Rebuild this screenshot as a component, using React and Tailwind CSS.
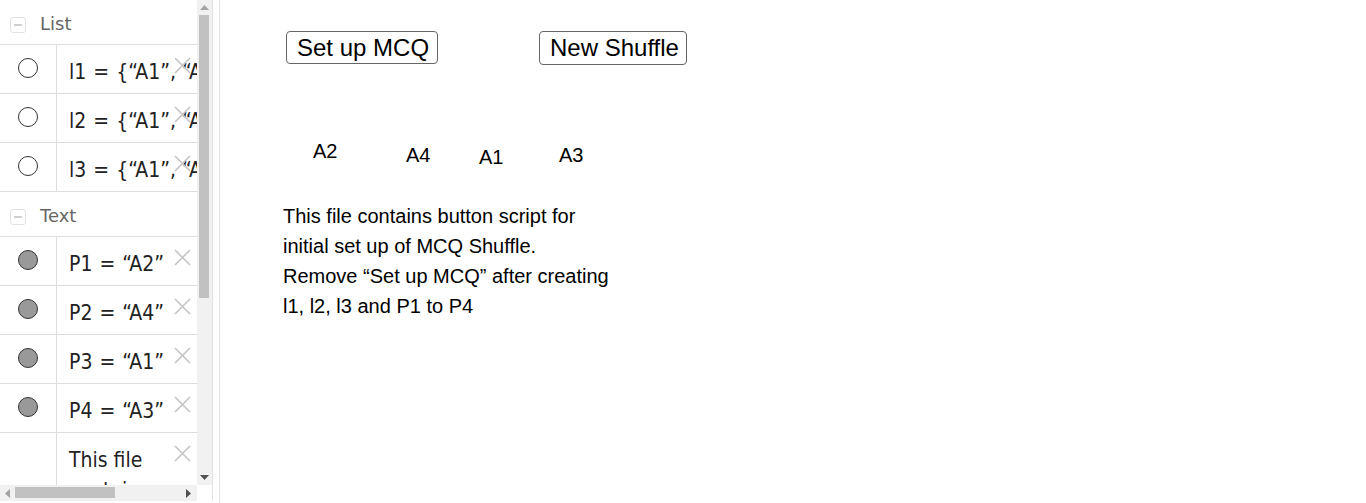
import React from 'react';

const mathFont = { fontFamily: "'DejaVu Sans Condensed', 'DejaVu Sans', sans-serif", fontStretch: 'condensed' };

const CloseX = () => (
  <svg width="17" height="17" viewBox="0 0 17 17" className="absolute right-[6px] top-[12px]">
    <path d="M1 1 L16 16 M16 1 L1 16" stroke="#c4c4c4" strokeWidth="1.6" fill="none" />
  </svg>
);

const Marble = ({ filled }) => (
  <span
    className={`mt-[13px] block h-[20px] w-[20px] rounded-full border-[1.5px] border-[#333] ${filled ? 'bg-[#999]' : 'bg-white'}`}
  />
);

const Header = ({ label, h }) => (
  <div className={`flex items-start border-b border-[#ddd] ${h}`}>
    <span className="ml-[10px] mt-[17px] flex h-[16px] w-[16px] items-center justify-center rounded-[3px] border border-[#e2e2e2]">
      <span className="block h-[2px] w-[8px] bg-[#cfcfcf]" />
    </span>
    <span className="ml-[14px] mt-[12px] text-[18px] leading-[24px] text-[#666]" style={{ fontFamily: "'DejaVu Sans', sans-serif" }}>
      {label}
    </span>
  </div>
);

// "a = b" with the wider spacing of the formula renderer
const Formula = ({ left, right }) => (
  <span className="whitespace-nowrap">
    {left}
    <span className="mx-[7px]">=</span>
    {right}
  </span>
);

const Row = ({ children, marble }) => (
  <div className="flex h-[49px] border-b border-[#ddd]">
    <div className="flex w-[57px] shrink-0 justify-center border-r border-[#ddd]">
      {marble && <Marble filled={marble === 'filled'} />}
    </div>
    <div className="relative flex-1 overflow-hidden pl-[12px] pt-[12px]">
      <div className="whitespace-nowrap text-[21px] leading-[30px] text-[#222]" style={mathFont}>
        {children}
      </div>
      <CloseX />
    </div>
  </div>
);

const lists = ['l1', 'l2', 'l3'];
const texts = [
  ['P1', 'A2'],
  ['P2', 'A4'],
  ['P3', 'A1'],
  ['P4', 'A3'],
];

const labels = [
  { t: 'A2', x: 314, y: 139 },
  { t: 'A4', x: 407, y: 143 },
  { t: 'A1', x: 480, y: 145 },
  { t: 'A3', x: 560, y: 143 },
];

export default function App() {
  return (
    <div className="flex h-[503px] w-[1366px] overflow-hidden bg-white">
      {/* Algebra view */}
      <div className="flex h-[501px] w-[213px] shrink-0 flex-col border-r border-[#e3e3e3]">
        <div className="flex h-[485px]">
          <div className="w-[198px] overflow-hidden">
            <Header label="List" h="h-[45px]" />
            {lists.map((l) => (
              <Row key={l} marble="empty">
                <Formula left={l} right="{“A1”, “A2”, “A3”, “A4”}" />
              </Row>
            ))}
            <Header label="Text" h="h-[45px]" />
            {texts.map(([p, a]) => (
              <Row key={p} marble="filled">
                <Formula left={p} right={`“${a}”`} />
              </Row>
            ))}
            <div className="flex h-[60px]">
              <div className="w-[57px] shrink-0 border-r border-[#ddd]" />
              <div className="relative flex-1 overflow-hidden pl-[12px] pt-[12px]">
                <div className="text-[21px] leading-[30px] text-[#222]" style={mathFont}>
                  This file
                  <br />
                  contains
                </div>
                <CloseX />
              </div>
            </div>
          </div>
          {/* vertical scrollbar */}
          <div className="relative w-[15px] bg-[#f1f1f1]">
            <svg width="9" height="5" viewBox="0 0 9 5" className="absolute left-[3px] top-[5px]">
              <path d="M0 5 L4.5 0 L9 5 Z" fill="#a3a3a3" />
            </svg>
            <div className="absolute left-[2px] top-[15px] h-[283px] w-[10px] bg-[#c1c1c1]" />
            <svg width="9" height="5" viewBox="0 0 9 5" className="absolute bottom-[5px] left-[3px]">
              <path d="M0 0 L4.5 5 L9 0 Z" fill="#505050" />
            </svg>
          </div>
        </div>
        {/* horizontal scrollbar */}
        <div className="flex h-[16px]">
          <div className="relative w-[198px] bg-[#f1f1f1]">
            <svg width="5" height="9" viewBox="0 0 5 9" className="absolute left-[5px] top-[4px]">
              <path d="M5 0 L0 4.5 L5 9 Z" fill="#a3a3a3" />
            </svg>
            <div className="absolute left-[15px] top-[2px] h-[11px] w-[100px] bg-[#c1c1c1]" />
            <svg width="5" height="9" viewBox="0 0 5 9" className="absolute right-[6px] top-[4px]">
              <path d="M0 0 L5 4.5 L0 9 Z" fill="#505050" />
            </svg>
          </div>
          <div className="w-[15px] bg-white" />
        </div>
      </div>
      {/* splitter */}
      <div className="w-[7px] shrink-0 border-r border-[#e3e3e3] bg-white" />

      {/* Graphics view */}
      <div className="relative flex-1" style={{ fontFamily: "'Liberation Sans', Arial, sans-serif" }}>
        <button
          className="absolute left-[66px] top-[31px] h-[33px] w-[152px] whitespace-nowrap rounded-[4px] border border-[#666] bg-white pl-[10px] text-left text-[24px] leading-[30px] text-black"
          style={{ fontFamily: "'Liberation Sans', Arial, sans-serif" }}
        >
          Set up MCQ
        </button>
        <button
          className="absolute left-[319px] top-[31px] h-[34px] w-[148px] whitespace-nowrap rounded-[4px] border border-[#666] bg-white pl-[10px] text-left text-[24px] leading-[32px] text-black"
          style={{ fontFamily: "'Liberation Sans', Arial, sans-serif" }}
        >
          New Shuffle
        </button>
        {labels.map((l) => (
          <span
            key={l.t}
            className="absolute text-[20px] leading-[24px] text-black"
            style={{ left: l.x - 221, top: l.y }}
          >
            {l.t}
          </span>
        ))}
        <div className="absolute left-[63px] top-[201px] whitespace-nowrap text-[20px] leading-[30px] text-black">
          This file contains button script for
          <br />
          initial set up of MCQ Shuffle.
          <br />
          Remove “Set up MCQ” after creating
          <br />
          l1, l2, l3 and P1 to P4
        </div>
      </div>
    </div>
  );
}
